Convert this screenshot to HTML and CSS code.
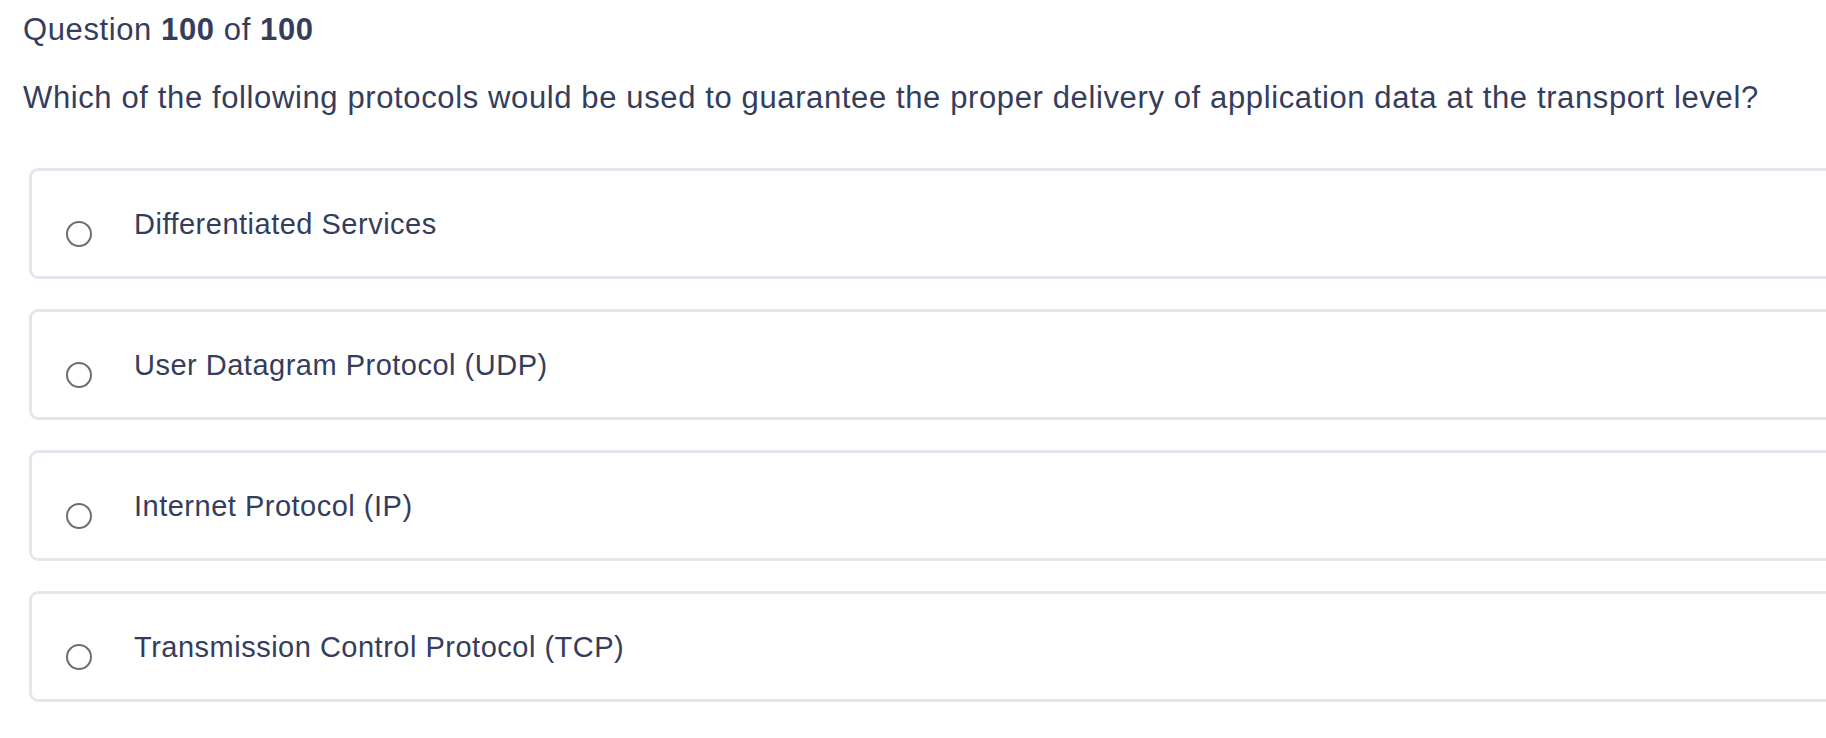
FILE: index.html
```html
<!DOCTYPE html>
<html lang="en">
<head>
    <meta charset="UTF-8">
    <title>Question 100 of 100</title>
    <link rel="stylesheet" href="styles.css">
</head>
<body>
    <div class="quiz">
        <div class="counter">Question <b>100</b> of <b>100</b></div>
        <p class="prompt">Which of the following protocols would be used to guarantee the proper delivery of application data at the transport level?</p>

        <div class="options">
            <label class="option">
                <span class="radio"></span>
                <span class="option-text">Differentiated Services</span>
            </label>
            <label class="option">
                <span class="radio"></span>
                <span class="option-text">User Datagram Protocol (UDP)</span>
            </label>
            <label class="option">
                <span class="radio"></span>
                <span class="option-text">Internet Protocol (IP)</span>
            </label>
            <label class="option">
                <span class="radio"></span>
                <span class="option-text">Transmission Control Protocol (TCP)</span>
            </label>
        </div>
    </div>
</body>
</html>
```

FILE: styles.css
```css
html, body {
    margin: 0;
    padding: 0;
    overflow: hidden;
    background: #fff;
}
body {
    font-family: "Liberation Sans", Arial, sans-serif;
    color: #353d5c;
}
.quiz {
    padding: 13px 0 0 23px;
}
.counter {
    font-size: 31px;
    line-height: 34px;
    letter-spacing: 0.6px;
}
.counter b {
    font-weight: bold;
}
.prompt {
    margin: 34px 0 0 0;
    font-size: 31px;
    line-height: 34px;
    letter-spacing: 0.62px;
}
.options {
    margin: 53px -40px 0 6px;
    display: flex;
    flex-direction: column;
    gap: 30px;
}
.option {
    display: flex;
    align-items: center;
    gap: 42px;
    box-sizing: border-box;
    height: 111px;
    padding-left: 34px;
    border: 3px solid #e3e6ed;
    border-radius: 9px;
    background: #fff;
    cursor: pointer;
}
.radio {
    flex: none;
    box-sizing: border-box;
    width: 26px;
    height: 26px;
    margin-top: 20px;
    border: 2px solid #6d6d6d;
    border-radius: 50%;
}
.option-text {
    font-size: 29px;
    line-height: 32px;
    letter-spacing: 0.5px;
}
```
